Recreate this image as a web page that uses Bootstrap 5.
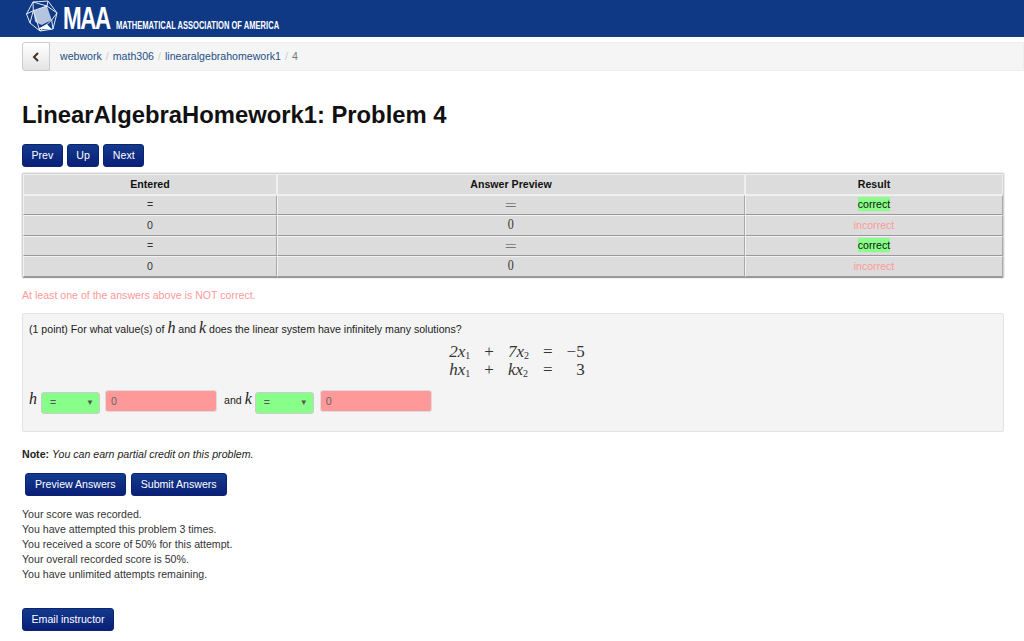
<!DOCTYPE html>
<html lang="en">
<head>
<meta charset="utf-8">
<title>Problem 4</title>
<link href="https://cdn.jsdelivr.net/npm/bootstrap@5.3.0/dist/css/bootstrap.min.css" rel="stylesheet">
<style>
html,body{height:641px;overflow:hidden}
body{font-family:"Liberation Sans",Arial,sans-serif;font-size:10.6px;line-height:15px;color:#222;background:#fff}
.topbar{height:37px;background:#0f3985;color:#fff;padding-left:26px;overflow:hidden}
.maa-word{font-size:32px;line-height:32px;font-weight:700;letter-spacing:-2px;transform:scaleX(.7);transform-origin:left;width:48px;margin-left:5px;margin-top:2px;flex:none}
.maa-sub{font-size:10.5px;font-weight:700;transform:scaleX(.72);transform-origin:left;white-space:nowrap;margin-left:5px;margin-top:19px;line-height:12px;flex:none}
.flex-none{flex:none}
.crumbrow{margin:5px 0 0 22px;height:29px}
.backbtn{width:28px;height:29px;background:linear-gradient(#fff,#e4e4e4);border:1px solid #ccc;border-radius:3px 0 0 3px;color:#5c3317}
.crumbs{flex:1;height:29px;background:#f5f5f5;border:1px solid #eee;border-left:0;padding-left:10px;color:#bbb}
.crumbs a{color:#1d4f86;text-decoration:none}
.crumbs .sepmark{margin:0 4px;color:#ccc}
.crumbs .last{color:#777}
.maincol{padding:0 20px 0 22px}
.pagetitle{font-size:23.8px;line-height:28px;font-weight:700;color:#111;margin:30px 0 15px;font-family:"Liberation Sans",sans-serif}
.mbtn{background:linear-gradient(#133a8c,#0a1f78);border:1px solid #0a246f;color:#fff;border-radius:3px;font-size:10.6px;line-height:14px;padding:3px 9px;height:23px}
.mbtn:hover{color:#fff}
.navgap{gap:4px;margin-bottom:6px}
.navgap .mbtn,.mbtn.emailbtn{padding:3px 8.5px}
.restable{width:982px;border-collapse:separate;border-spacing:0;background:#dcdcdc;border:1px solid #d0d0d0;border-bottom:1px solid #999;border-radius:2px;table-layout:fixed;box-shadow:0 0 0 1px #eee}
.restable th,.restable td{height:20.5px;padding:0;text-align:center;vertical-align:middle;border-left:1px solid #f2f2f2;border-right:1px solid #a9a9a9;border-top:1px solid #f2f2f2;border-bottom:1px solid #999;background:#dcdcdc;line-height:15px}
.restable th{font-weight:700;color:#111;border-bottom-color:#eee;border-right-color:#eee}
.restable td{color:#333}
.colone{width:254px}
.coltwo{width:468px}
.mathcell{font-family:"Liberation Serif",serif;color:#333}
.eqsign{display:inline-block;font-size:17px;color:#777;transform:translateY(2px) scaleX(1.25)}
.zerosign{display:inline-block;font-size:15px;transform:scaleX(.8)}
.oktext{background:#8f8;color:#111;padding:1px 0}
.badtext{color:#f99}
.warnline{color:#f99;margin:10px 0 10px}
.probbox{width:982px;height:119px;background:#f4f4f4;border:1px solid #e3e3e3;border-radius:2px;padding:6px}
.mth{font-family:"Liberation Serif",serif;font-style:italic;font-size:16px;color:#222}
.eqgrid{display:grid;grid-template-columns:auto auto auto auto auto;justify-content:center;column-gap:14px;font-family:"Liberation Serif",serif;font-size:17px;line-height:18px;color:#333;margin:6px 0 0 0;transform:translateX(4px)}
.eqgrid i sub{font-size:10px;font-style:normal;line-height:0}
.eqgrid span{text-align:right}
.formrow{margin-top:11px}
.hmark{margin:1px 4px 0 0}
.selbox{width:59px;height:22px;background:#8f8;border:1px solid #ccc;border-radius:3px;margin-top:2px;padding:0 5px 0 8px;color:#555;flex:none}
.caretmark{font-size:8px;color:#555}
.inbox{width:112px;height:22px;background:#f99;border:1px solid #ddd;border-radius:3px;padding:0 5px;color:#666;line-height:20px;margin-left:5px;flex:none}
.andword{margin:1px 3px 0 7px}
.inbox.lastbox{margin-left:6px}
.noteline{margin:15px 0 11px}
.subrow{gap:5px;margin:0 0 11px 3px}
.scorelines{line-height:15px;margin-bottom:26px}
.scorelines div{color:#333}
</style>
</head>
<body>
<header class="topbar d-flex align-items-start">
  <svg width="32" height="32" viewBox="0 0 32 32" fill="none" stroke="#e6ebf5" stroke-width="1" class="flex-none" aria-hidden="true">
    <path d="M7.3 10.7 L21 6 L25.7 20 L15.7 25 L9 21.7 Z" fill="#b4c3de" stroke="none"/>
    <path d="M11.3 29.3 L20.7 24 L25.7 29.3 Z" fill="#fff" stroke="none"/>
    <path d="M7 2 L22 1 L31 13 L27 29 L14 31 L4 23 L0.5 14 Z"/>
    <path d="M7 2 L7.3 10.7 L0.5 14 M7 2 L21 6 L22 1 M21 6 L31 13 M21 6 L7.3 10.7 L4 23 M25.7 20 L31 13 M25.7 20 L27 29 M25.7 20 L14 31 M7.3 10.7 L14 31"/>
  </svg>
  <div class="maa-word">MAA</div>
  <div class="maa-sub">MATHEMATICAL ASSOCIATION OF AMERICA</div>
</header>

<nav class="crumbrow d-flex">
  <div class="backbtn d-flex align-items-center justify-content-center">
    <svg width="8" height="10" viewBox="0 0 8 10" fill="none" stroke="#4a3020" stroke-width="2" aria-hidden="true"><path d="M6 1 L2 5 L6 9"/></svg>
  </div>
  <div class="crumbs d-flex align-items-center">
    <a href="#">webwork</a><span class="sepmark">/</span><a href="#">math306</a><span class="sepmark">/</span><a href="#">linearalgebrahomework1</a><span class="sepmark">/</span><span class="last">4</span>
  </div>
</nav>

<main class="maincol">
  <h1 class="pagetitle">LinearAlgebraHomework1: Problem 4</h1>
  <div class="d-flex navgap">
    <a href="#" class="btn mbtn">Prev</a>
    <a href="#" class="btn mbtn">Up</a>
    <a href="#" class="btn mbtn">Next</a>
  </div>

  <table class="restable">
    <colgroup><col class="colone"><col class="coltwo"><col></colgroup>
    <thead><tr><th>Entered</th><th>Answer Preview</th><th>Result</th></tr></thead>
    <tbody>
      <tr><td>=</td><td class="mathcell"><span class="eqsign">=</span></td><td><span class="oktext">correct</span></td></tr>
      <tr><td>0</td><td class="mathcell"><span class="zerosign">0</span></td><td><span class="badtext">incorrect</span></td></tr>
      <tr><td>=</td><td class="mathcell"><span class="eqsign">=</span></td><td><span class="oktext">correct</span></td></tr>
      <tr><td>0</td><td class="mathcell"><span class="zerosign">0</span></td><td><span class="badtext">incorrect</span></td></tr>
    </tbody>
  </table>

  <div class="warnline">At least one of the answers above is NOT correct.</div>

  <section class="probbox">
    <div>(1 point) For what value(s) of <span class="mth">h</span> and <span class="mth">k</span> does the linear system have infinitely many solutions?</div>
    <div class="eqgrid">
      <i>2x<sub>1</sub></i><span>+</span><i>7x<sub>2</sub></i><span>=</span><span>−5</span>
      <i>hx<sub>1</sub></i><span>+</span><i>kx<sub>2</sub></i><span>=</span><span>3</span>
    </div>
    <div class="d-flex align-items-start formrow">
      <span class="mth hmark">h</span>
      <div class="selbox d-flex align-items-center justify-content-between"><span>=</span><span class="caretmark">▼</span></div>
      <div class="inbox">0</div>
      <span class="andword">and <span class="mth">k</span></span>
      <div class="selbox d-flex align-items-center justify-content-between"><span>=</span><span class="caretmark">▼</span></div>
      <div class="inbox lastbox">0</div>
    </div>
  </section>

  <div class="noteline"><b>Note:</b> <i>You can earn partial credit on this problem.</i></div>
  <div class="d-flex subrow">
    <a href="#" class="btn mbtn">Preview Answers</a>
    <a href="#" class="btn mbtn">Submit Answers</a>
  </div>
  <div class="scorelines">
    <div>Your score was recorded.</div>
    <div>You have attempted this problem 3 times.</div>
    <div>You received a score of 50% for this attempt.</div>
    <div>Your overall recorded score is 50%.</div>
    <div>You have unlimited attempts remaining.</div>
  </div>
  <a href="#" class="btn mbtn emailbtn">Email instructor</a>
</main>
<script src="https://cdn.jsdelivr.net/npm/bootstrap@5.3.0/dist/js/bootstrap.bundle.min.js"></script>
</body>
</html>
